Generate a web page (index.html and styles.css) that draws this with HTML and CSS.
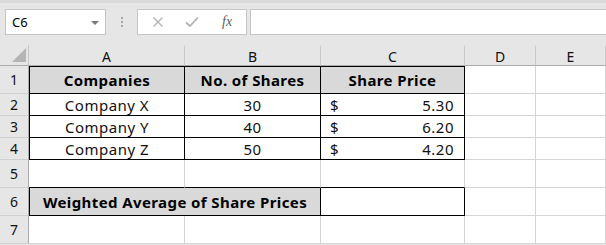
FILE: index.html
```html
<!DOCTYPE html>
<html>
<head>
    <title>Weighted Average</title>
    <link rel="stylesheet" href="styles.css">
</head>
<body>
    <div class="toolbar">
        <div class="name-box">
            <span>C6</span>
            <span class="drop"></span>
        </div>
        <div class="grip"><i></i><i></i><i></i></div>
        <div class="fx-box">
            <svg class="ico" width="12" height="12" viewBox="0 0 12 12"><path d="M1.5 1.5 L10.5 10.5 M10.5 1.5 L1.5 10.5" stroke="#b3b3b3" stroke-width="1.4" fill="none"/></svg>
            <svg class="ico" width="14" height="12" viewBox="0 0 14 12"><path d="M1 6.5 L5 10 L13 1.5" stroke="#b3b3b3" stroke-width="1.8" fill="none"/></svg>
            <span class="fx">fx</span>
        </div>
        <div class="formula"></div>
    </div>

    <div class="sheet">
        <div class="corner"><span class="tri"></span></div>
        <div class="hd">A</div>
        <div class="hd">B</div>
        <div class="hd">C</div>
        <div class="hd">D</div>
        <div class="hd">E</div>

        <div class="rh">1</div>
        <div class="c fill bold bt bl br bb center">Companies</div>
        <div class="c fill bold bt br bb center">No. of Shares</div>
        <div class="c fill bold bt br bb center">Share Price</div>
        <div class="c"></div>
        <div class="c"></div>

        <div class="rh">2</div>
        <div class="c bl br bb center">Company X</div>
        <div class="c br bb center">30</div>
        <div class="c br bb money"><span>$</span><span>5.30</span></div>
        <div class="c"></div>
        <div class="c"></div>

        <div class="rh">3</div>
        <div class="c bl br bb center">Company Y</div>
        <div class="c br bb center">40</div>
        <div class="c br bb money"><span>$</span><span>6.20</span></div>
        <div class="c"></div>
        <div class="c"></div>

        <div class="rh">4</div>
        <div class="c bl br bb center">Company Z</div>
        <div class="c br bb center">50</div>
        <div class="c br bb money"><span>$</span><span>4.20</span></div>
        <div class="c"></div>
        <div class="c"></div>

        <div class="rh">5</div>
        <div class="c bb"></div>
        <div class="c bb"></div>
        <div class="c bb"></div>
        <div class="c"></div>
        <div class="c"></div>

        <div class="rh">6</div>
        <div class="c fill bold bl br bb center span2">Weighted Average of Share Prices</div>
        <div class="c br bb"></div>
        <div class="c"></div>
        <div class="c"></div>

        <div class="rh">7</div>
        <div class="c"></div>
        <div class="c"></div>
        <div class="c"></div>
        <div class="c"></div>
        <div class="c"></div>
    </div>
</body>
</html>
```

FILE: styles.css
```css
body { margin: 0; background: #e6e6e6; font-family: "Noto Sans", Arial, sans-serif; overflow: hidden; }

.toolbar { height: 45px; display: flex; align-items: flex-start; box-sizing: border-box; border-top: 3px solid #dadada; padding-top: 6px; }
.name-box { margin-left: 5px; width: 101px; height: 26px; box-sizing: border-box; background: #fff; border: 1px solid #c6c6c6; display: flex; align-items: center; justify-content: space-between; padding: 0 6px; font-size: 13px; color: #000; }
.drop { width: 0; height: 0; border-left: 4px solid transparent; border-right: 4px solid transparent; border-top: 4px solid #7a7a7a; margin-top: 1px; }
.grip { width: 31px; height: 26px; display: flex; flex-direction: column; align-items: center; justify-content: center; gap: 2px; }
.grip i { width: 2px; height: 2px; background: #a6a6a6; }
.fx-box { width: 110px; height: 26px; box-sizing: border-box; background: #fff; border: 1px solid #c6c6c6; display: flex; align-items: center; padding-left: 14px; gap: 21px; }
.fx { font-family: "Liberation Serif", serif; font-style: italic; font-size: 14px; color: #5f5f5f; margin-left: 2px; }
.formula { flex: 1; margin-left: 3px; height: 26px; box-sizing: border-box; background: #fff; border: 1px solid #c6c6c6; border-right: none; }

.sheet { display: grid; grid-template-columns: 29px 156px 136px 144px 71px 70px; grid-template-rows: 21px 28px 22px 22px 22px 28px 28px 28px; background: #fff; }
.sheet > div { box-sizing: border-box; display: flex; align-items: center; font-size: 15px; color: #111; min-width: 0; white-space: nowrap; letter-spacing: 0.5px; }

.corner { background: #e6e6e6; border-right: 1px solid #c8c8c8; border-bottom: 1px solid #ababab; justify-content: flex-end; align-items: flex-end !important; padding: 0 2px 3px 0; }
.tri { width: 0; height: 0; border-left: 14px solid transparent; border-bottom: 14px solid #b5b5b5; }
.hd { background: #e6e6e6; border-right: 1px solid #c8c8c8; border-bottom: 1px solid #ababab; justify-content: center; font-size: 14px !important; border-top: 2px solid #e6e6e6; letter-spacing: 0 !important; }
.rh { background: #e6e6e6; border-right: 1px solid #ababab; border-bottom: 1px solid #d0d0d0; justify-content: center; font-size: 14px !important; letter-spacing: 0 !important; }

.c { border-right: 1px solid #d4d4d4; border-bottom: 1px solid #d4d4d4; }
.fill { background: #d9d9d9; }
.bold { font-weight: bold; letter-spacing: 0.4px !important; color: #000 !important; }
.center { justify-content: center; }
.span2 { grid-column: span 2; }
.bt { border-top: 1px solid #000; }
.bl { border-left: 1px solid #000; }
.br { border-right-color: #000 !important; }
.bb { border-bottom-color: #000 !important; }
.money { justify-content: space-between; padding: 0 10px 0 9px; }
```
